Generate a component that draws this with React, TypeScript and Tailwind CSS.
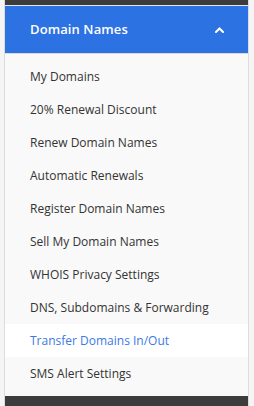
import React from 'react';

const items = [
  'My Domains',
  '20% Renewal Discount',
  'Renew Domain Names',
  'Automatic Renewals',
  'Register Domain Names',
  'Sell My Domain Names',
  'WHOIS Privacy Settings',
  'DNS, Subdomains & Forwarding',
  'Transfer Domains In/Out',
  'SMS Alert Settings',
];

const active = 'Transfer Domains In/Out';

function App() {
  return (
    <div className="w-[254px] h-[406px] overflow-hidden bg-[#f5f5f5] pl-[4px] pr-[5px] font-['Open_Sans',sans-serif]">
      <div className="h-full border-x border-[#dcdcdc] bg-[#f9f9f9] flex flex-col">
        {/* top dark strip */}
        <div className="h-[5px] bg-[#3c3c3c] shrink-0" />
        <div className="h-px bg-[#e6e6e6] shrink-0" />

        {/* section header */}
        <div className="h-[48px] bg-[#2d72e2] flex items-center justify-between pl-[25px] pr-[24px] shrink-0 border-b border-[#dadada]">
          <span className="text-white text-[13px] font-semibold tracking-[0.1px]">Domain Names</span>
          <svg width="9" height="6" viewBox="0 0 9 6" fill="none">
            <path d="M1 5 L4.5 1.5 L8 5" stroke="white" strokeWidth="2" strokeLinecap="square" />
          </svg>
        </div>

        {/* links */}
        <ul className="pt-[6px] pb-[6px] shrink-0">
          {items.map((label) => (
            <li
              key={label}
              className={
                label === active
                  ? 'h-[33px] flex items-center pl-[25px] pt-px bg-white text-[#3a7ae6] text-[12px] font-medium'
                  : 'h-[33px] flex items-center pl-[25px] pt-px text-[#333333] text-[12px]'
              }
            >
              {label}
            </li>
          ))}
        </ul>

        {/* next dark section */}
        <div className="flex-1 bg-[#3c3c3c]" />
      </div>
    </div>
  );
}

export default App;
